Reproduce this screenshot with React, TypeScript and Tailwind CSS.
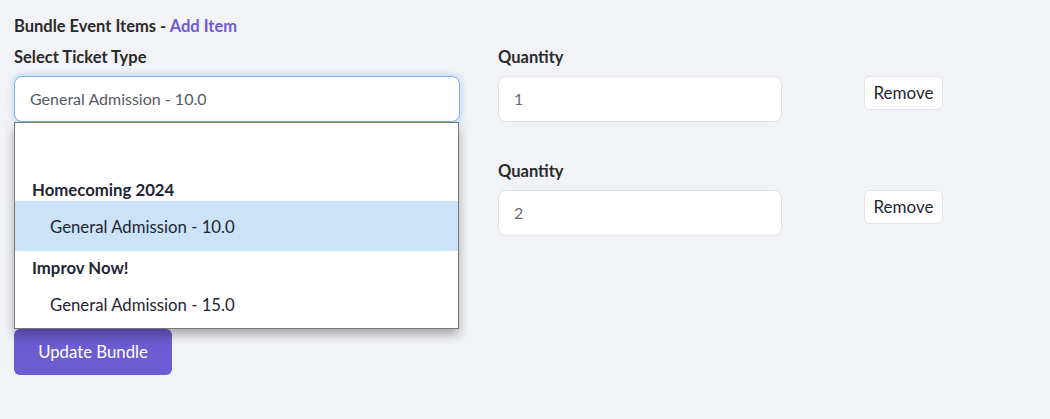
import React from "react";

const font = { fontFamily: "Lato, 'Noto Sans', sans-serif" };

function Row({ qty, label, focused, hideSelect }: { qty: string; label: string; focused?: boolean; hideSelect?: boolean }) {
  return (
    <div className="flex items-start">
      <div className={"w-[446px] flex flex-col " + (hideSelect ? "invisible" : "")}>
        <div className="h-[20px] leading-[20px] text-[16.5px] font-bold text-[#2a2a2a]">Select Ticket Type</div>
        <div
          className={
            "mt-[9px] h-[46px] rounded-[8px] bg-white flex items-center pl-[15px] text-[16px] text-[#555b66] " +
            (focused
              ? "border border-[#7fb3ec] shadow-[0_0_6px_2px_rgba(120,170,235,0.35)]"
              : "border border-[#dfe2ea]")
          }
        >
          {label}
        </div>
      </div>
      <div className="ml-[38px] w-[284px] flex flex-col">
        <div className="h-[20px] leading-[20px] text-[16.5px] font-bold text-[#2a2a2a]">Quantity</div>
        <div className="mt-[9px] h-[46px] rounded-[8px] bg-white border border-[#dfe2ea] flex items-center pl-[15px] text-[16px] text-[#666b75]">
          {qty}
        </div>
      </div>
      <div className="ml-[82px] pt-[29px]">
        <button className="h-[34px] w-[79px] rounded-[6px] bg-white border border-[#e1e4ea] text-[17px] text-[#1f2633] flex items-center justify-center">
          Remove
        </button>
      </div>
    </div>
  );
}

export default function App() {
  return (
    <div className="min-h-[419px] w-full bg-[#f2f3f7] px-[14px] pt-[16px]" style={font}>
      <div className="h-[20px] leading-[20px] text-[16.5px] font-bold text-[#2a2a2a]">
        Bundle Event Items - <span className="text-[#6e5bd4]">Add Item</span>
      </div>
      <div className="relative mt-[11px]">
        <Row qty="1" label="General Admission - 10.0" focused />
        <div className="mt-[39px]">
          <Row qty="2" label="General Admission - 15.0" hideSelect />
        </div>
        <div className="mt-[93px]">
          <button className="h-[46px] w-[158px] rounded-[6px] bg-[#6c5bd1] text-white text-[16.75px] flex items-center justify-center">
            Update Bundle
          </button>
        </div>
        <div className="absolute left-0 top-[75px] w-[445px] bg-white border border-[#767676] shadow-[0_6px_10px_rgba(0,0,0,0.3)] text-[16.75px] text-[#1f2633]">
          <div className="h-[49px]" />
          <div className="h-[29px] pt-[8px] pl-[17px] leading-[20px] font-bold">Homecoming 2024</div>
          <div className="h-[50px] bg-[#cce2f7] flex items-center pl-[35px] pt-[2px]">General Admission - 10.0</div>
          <div className="h-[36px] pt-[7px] pl-[17px] leading-[20px] font-bold">Improv Now!</div>
          <div className="h-[41px] pt-[8px] pl-[35px] leading-[20px]">General Admission - 15.0</div>
        </div>
      </div>
    </div>
  );
}
